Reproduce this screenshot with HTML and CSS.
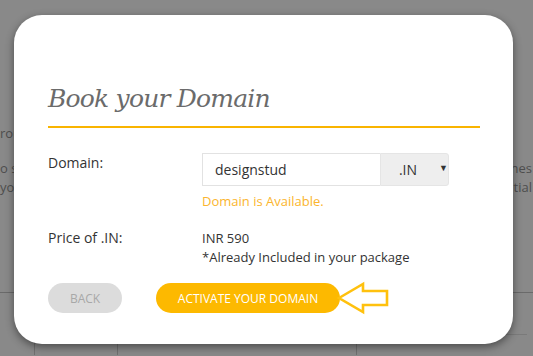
FILE: index.html
```html
<!DOCTYPE html>
<html>
<head>
<meta charset="utf-8">
<link rel="stylesheet" href="styles.css">
</head>
<body>
<div class="page">
  <div class="bg-row r1"><span class="bl">rou</span><span class="br"></span></div>
  <div class="bg-row r2"><span class="bl">o s</span><span class="br">nes</span></div>
  <div class="bg-row r3"><span class="bl">you</span><span class="br">tial</span></div>
  <div class="bg-rule"></div>
  <div class="bg-boxes">
    <div class="bx b1"></div>
    <div class="bx b2"></div>
    <div class="bx b3"></div>
  </div>
</div>

<div class="modal">
  <h1 class="title">Book your Domain</h1>
  <div class="form-row">
    <div class="label">Domain:</div>
    <div class="field">
      <div class="combo">
        <div class="input">designstud</div>
        <div class="select"><span>.IN</span><span class="caret">&#9660;</span></div>
      </div>
      <div class="avail">Domain is Available.</div>
    </div>
  </div>
  <div class="form-row price">
    <div class="label">Price of .IN:</div>
    <div class="field">
      <div class="val">INR 590</div>
      <div class="val">*Already Included in your package</div>
    </div>
  </div>
  <div class="actions">
    <button class="btn back">BACK</button>
    <button class="btn go">ACTIVATE YOUR DOMAIN</button>
    <svg class="arrow" width="54" height="34" viewBox="0 0 54 34">
      <path d="M3 17 L27 3 L27 10 L51 10 L51 24 L27 24 L27 31 Z" fill="none" stroke="#ffc10e" stroke-width="2.6" stroke-linejoin="miter"/>
    </svg>
  </div>
</div>
</body>
</html>
```
FILE: styles.css
```css
html, body {
  margin: 0;
  padding: 0;
}
body {
  width: 533px;
  height: 356px;
  overflow: hidden;
  background: #898989;
  font-family: "Open Sans", "Liberation Sans", sans-serif;
  position: relative;
}
.page {
  height: 356px;
  display: flex;
  flex-direction: column;
  color: #4e4e4e;
  font-size: 13px;
}
.bg-row {
  display: flex;
  justify-content: space-between;
  height: 18px;
  line-height: 18px;
}
.r1 { margin-top: 124px; }
.r2 { margin-top: 17px; }
.r3 { margin-top: 1px; }
.bl { margin-left: 0; }
.br { margin-right: 1px; }
.bg-rule {
  margin-top: 96px;
  height: 1px;
  background: #6a6a6a;
}
.bg-boxes {
  margin-top: 41px;
  display: flex;
  gap: 0;
}
.bx {
  height: 20px;
  border-left: 1px solid #707070;
  border-top: 1px solid #7a7a7a;
}
.b1 { margin-left: 34px; width: 80px; }
.b2 { margin-left: 2px; width: 238px; border-radius: 4px 0 0 0; }
.b3 { width: 170px; }

.modal {
  position: absolute;
  left: 14px;
  top: 15px;
  width: 499px;
  height: 329px;
  box-sizing: border-box;
  background: #fff;
  border-radius: 28px;
  box-shadow: 0 3px 8px rgba(0,0,0,0.45);
  padding: 67px 33px 0 34px;
  color: #333;
}
.title {
  margin: 0;
  font-family: "DejaVu Serif", "Liberation Serif", serif;
  font-style: italic;
  font-weight: normal;
  font-size: 25px;
  line-height: 34px;
  color: #6b6b6b;
  padding-bottom: 10px;
  border-bottom: 2px solid #f9b400;
  letter-spacing: -0.8px;
}
.form-row {
  display: flex;
  margin-top: 25px;
}
.label {
  width: 154px;
  font-size: 14px;
  line-height: 18px;
  padding-top: 1px;
  color: #333;
}
.field {
  display: flex;
  flex-direction: column;
}
.combo {
  display: flex;
  height: 33px;
  width: 247px;
  box-sizing: border-box;
}
.input {
  width: 179px;
  box-sizing: border-box;
  border: 1px solid #e2e2e2;
  border-right: none;
  padding: 0 12px;
  font-size: 14px;
  line-height: 31px;
  color: #333;
}
.select {
  flex: 1;
  background: #eeeeee;
  border: 1px solid #e5e5e5;
  border-radius: 0 3px 3px 0;
  display: flex;
  align-items: center;
  padding-left: 18px;
  font-size: 14px;
  color: #333;
}
.caret {
  font-size: 9px;
  margin-left: 22px;
  margin-top: -4px;
}
.avail {
  margin-top: 6px;
  font-size: 13px;
  line-height: 18px;
  color: #fbb52e;
}
.price {
  margin-top: 19px;
}
.price .label {
  padding-top: 0;
}
.val {
  font-size: 13px;
  line-height: 19px;
  color: #333;
}
.actions {
  display: flex;
  align-items: center;
  margin-top: 14px;
}
.btn {
  border: none;
  height: 30px;
  border-radius: 15px;
  font-family: "Open Sans", "Liberation Sans", sans-serif;
  font-size: 12px;
  padding: 0;
  letter-spacing: 0;
}
.back {
  width: 74px;
  background: #dcdcdc;
  color: #a8a8a8;
}
.go {
  margin-left: 34px;
  width: 184px;
  background: #fdb900;
  color: #fff;
}
.arrow {
  margin-left: -4px;
  margin-top: 0;
}
```
